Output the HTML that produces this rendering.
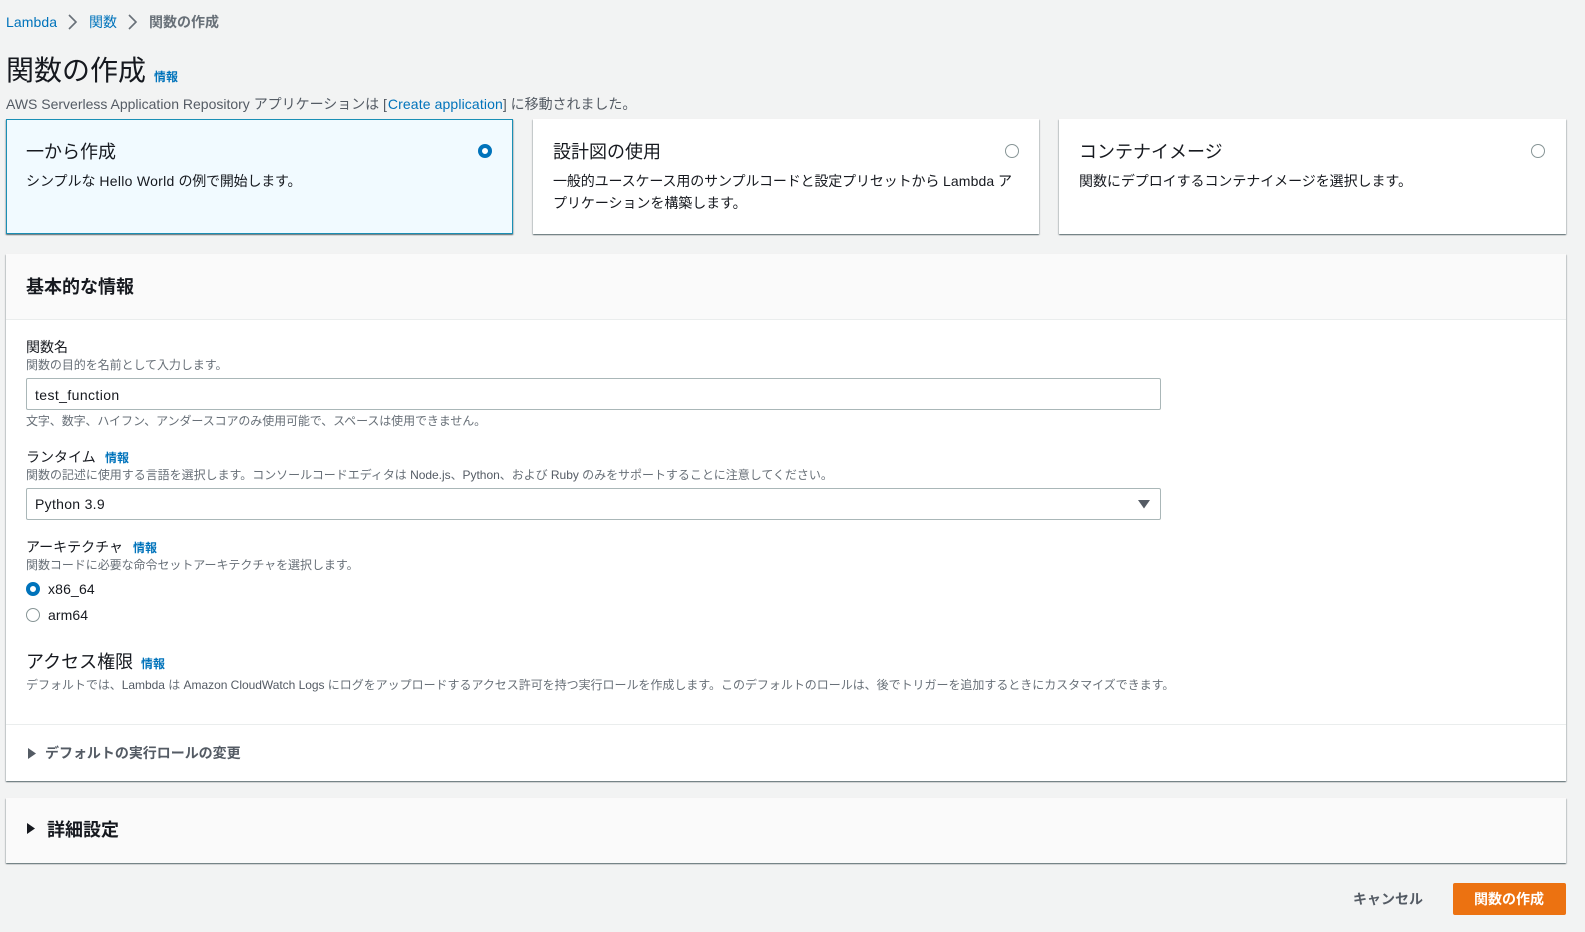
<!DOCTYPE html>
<html lang="ja"><head><meta charset="utf-8"><title>関数の作成</title>
<style>
html,body{margin:0;padding:0;width:1585px;height:932px;overflow:hidden;background:#f2f3f3;}
body{position:relative;font-family:"Liberation Sans","Noto Sans CJK JP",sans-serif;color:#16191f;font-size:14px;}
.t{position:absolute;white-space:nowrap;line-height:20px;height:20px;margin-top:-10px;}
.h{font-size:12px;color:#687078;}
.l{color:#0073bb;}
.i{font-size:12px;font-weight:bold;color:#0073bb;}
.la{letter-spacing:.28px;}
.card{position:absolute;top:119px;height:115px;background:#fff;box-shadow:0 1px 1px 0 rgba(0,28,36,.5),1px 1px 1px 0 rgba(0,28,36,.12),-1px 1px 1px 0 rgba(0,28,36,.12);box-sizing:border-box;}
.sel{background:#f1faff;border:1px solid #1a8fb5;}
.r{position:absolute;box-sizing:border-box;width:14px;height:14px;border-radius:50%;border:1px solid #879596;background:#fff;}
.ron{border:4px solid #0073bb;}
.box{position:absolute;left:26px;width:1135px;height:32px;box-sizing:border-box;background:#fff;border:1px solid #aab7b8;border-radius:2px;}
.panel{position:absolute;left:6px;width:1560px;background:#fff;box-shadow:0 1px 1px 0 rgba(0,28,36,.5),1px 1px 1px 0 rgba(0,28,36,.12),-1px 1px 1px 0 rgba(0,28,36,.12);}
.b{font-weight:bold;}
</style></head><body>
<div class="t l" style="left:6px;top:22px;letter-spacing:.1px">Lambda</div>
<svg style="position:absolute;left:67px;top:14px" width="12" height="16" viewBox="0 0 12 16"><path d="M2 1l7 7-7 7" fill="none" stroke="#687078" stroke-width="1.6"/></svg>
<div class="t l" style="left:89px;top:22px">関数</div>
<svg style="position:absolute;left:127px;top:14px" width="12" height="16" viewBox="0 0 12 16"><path d="M2 1l7 7-7 7" fill="none" stroke="#687078" stroke-width="1.6"/></svg>
<div class="t b" style="left:149px;top:22px;color:#687078">関数の作成</div>

<div class="t" style="left:6px;top:71px;font-size:28px;line-height:36px;height:36px;margin-top:-18px">関数の作成</div>
<div class="t i" style="left:154px;top:77px">情報</div>
<div class="t" style="left:6px;top:104px;color:#545b64"><span>AWS Serverless Application Repository</span> <span style="letter-spacing:-.03px">アプリケーションは [</span><span class="l" style="margin-left:1px;letter-spacing:.12px">Create application</span>] <span style="letter-spacing:-.04px">に移動されました。</span></div>

<div class="card sel" style="left:6px;width:507px"></div>
<div class="t" style="left:26px;top:152px;font-size:18px">一から作成</div>
<div class="t" style="left:26px;top:181px"><span style="letter-spacing:-.02px">シンプルな</span> <span class="la">Hello World</span> <span style="letter-spacing:-.2px">の例で開始します。</span></div>
<div class="r ron" style="left:478px;top:144px"></div>

<div class="card" style="left:533px;width:506px"></div>
<div class="t" style="left:553px;top:152px;font-size:18px">設計図の使用</div>
<div class="t" style="left:553px;top:181px;letter-spacing:-.13px">一般的ユースケース用のサンプルコードと設定プリセットから <span style="letter-spacing:.1px">Lambda</span> ア</div>
<div class="t" style="left:553px;top:203px;letter-spacing:-.05px">プリケーションを構築します。</div>
<div class="r" style="left:1005px;top:144px"></div>

<div class="card" style="left:1059px;width:507px"></div>
<div class="t" style="left:1079px;top:152px;font-size:18px">コンテナイメージ</div>
<div class="t" style="left:1079px;top:181px;letter-spacing:-.06px">関数にデプロイするコンテナイメージを選択します。</div>
<div class="r" style="left:1531px;top:144px"></div>

<div class="panel" style="top:254px;height:527px"></div>
<div style="position:absolute;left:6px;top:254px;width:1560px;height:66px;background:#fafafa;border-bottom:1px solid #eaeded;box-sizing:border-box"></div>
<div class="t b" style="left:26px;top:287px;font-size:18px">基本的な情報</div>

<div class="t" style="left:26px;top:347px">関数名</div>
<div class="t h" style="left:26px;top:365px;letter-spacing:-.06px">関数の目的を名前として入力します。</div>
<div class="box" style="top:378px"></div>
<div class="t" style="left:35px;top:395px;letter-spacing:.4px">test_function</div>
<div class="t h" style="left:26px;top:421px;letter-spacing:-.1px">文字、数字、ハイフン、アンダースコアのみ使用可能で、スペースは使用できません。</div>

<div class="t" style="left:26px;top:457px">ランタイム</div>
<div class="t i" style="left:105px;top:458px">情報</div>
<div class="t h" style="left:26px;top:475px;letter-spacing:-.03px">関数の記述に使用する言語を選択します。コンソールコードエディタは <span style="color:#545b64">Node.js</span>、<span style="color:#545b64">Python</span>、および <span style="color:#545b64">Ruby</span> のみをサポートすることに注意してください。</div>
<div class="box" style="top:488px"></div>
<div class="t" style="left:35px;top:504px;letter-spacing:.3px">Python 3.9</div>
<svg style="position:absolute;left:1138px;top:500px" width="12" height="9" viewBox="0 0 12 9"><path d="M0 0h12L6 8.5z" fill="#545b64"/></svg>

<div class="t" style="left:26px;top:547px">アーキテクチャ</div>
<div class="t i" style="left:133px;top:548px">情報</div>
<div class="t h" style="left:26px;top:565px;letter-spacing:-.05px">関数コードに必要な命令セットアーキテクチャを選択します。</div>
<div class="r ron" style="left:26px;top:582px"></div>
<div class="t" style="left:48px;top:589px;letter-spacing:.15px">x86_64</div>
<div class="r" style="left:26px;top:608px"></div>
<div class="t" style="left:48px;top:615px;letter-spacing:.1px">arm64</div>

<div class="t" style="left:26px;top:662px;font-size:18px">アクセス権限</div>
<div class="t i" style="left:141px;top:664px">情報</div>
<div class="t h" style="left:26px;top:685px;letter-spacing:-.03px">デフォルトでは、<span style="color:#545b64">Lambda</span> は <span style="color:#545b64">Amazon CloudWatch Logs</span> にログをアップロードするアクセス許可を持つ実行ロールを作成します。このデフォルトのロールは、後でトリガーを追加するときにカスタマイズできます。</div>

<div style="position:absolute;left:6px;top:724px;width:1560px;height:1px;background:#eaeded"></div>
<svg style="position:absolute;left:28px;top:748px" width="9" height="11" viewBox="0 0 9 11"><path d="M0 0l8 5.5L0 11z" fill="#545b64"/></svg>
<div class="t b" style="left:45px;top:753px;color:#545b64;letter-spacing:-.03px">デフォルトの実行ロールの変更</div>

<div class="panel" style="top:798px;height:65px;background:#fafafa"></div>
<svg style="position:absolute;left:27px;top:823px" width="9" height="11" viewBox="0 0 9 11"><path d="M0 0l8 5.5L0 11z" fill="#16191f"/></svg>
<div class="t b" style="left:47px;top:829.5px;font-size:18px">詳細設定</div>

<div class="t b" style="left:1353px;top:899px;color:#545b64">キャンセル</div>
<div style="position:absolute;left:1453px;top:883px;width:113px;height:32px;background:#ec7211;border-radius:2px"></div>
<div class="t b" style="left:1474px;top:899px;color:#fff">関数の作成</div>
</body></html>
